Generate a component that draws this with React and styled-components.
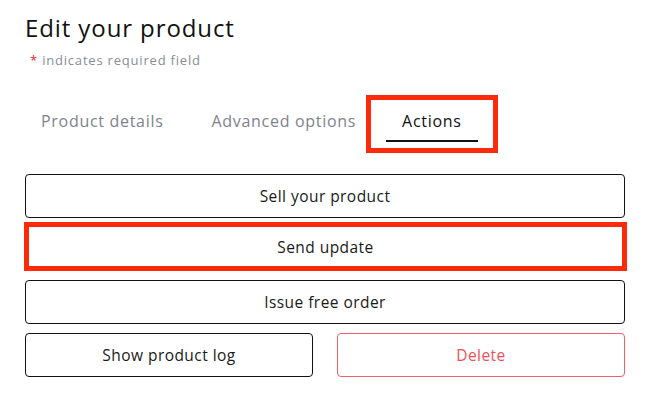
import styled, { createGlobalStyle } from "styled-components"

const GlobalStyle = createGlobalStyle`
  html, body {
    margin: 0;
    padding: 0;
    background: #ffffff;
  }
  body {
    font-family: "Open Sans", "Liberation Sans", sans-serif;
    color: #1a1a1a;
  }
  * {
    box-sizing: border-box;
  }
`

const tabs = [
  { label: "Product details" },
  { label: "Advanced options" },
  { label: "Actions", active: true, marked: true }
]

export default function App() {
  return (
    <>
      <GlobalStyle />
      <Page>
        <Title>Edit your product</Title>
        <Hint><Star>*</Star> indicates required field</Hint>

        <TabList>
          {tabs.map((t) =>
            t.marked ? (
              <Marker key={t.label}>
                <Tab $active={t.active}>{t.label}</Tab>
              </Marker>
            ) : (
              <Tab key={t.label} $active={t.active}>{t.label}</Tab>
            )
          )}
        </TabList>

        <Actions>
          <Button>Sell your product</Button>
          <Button $marked>Send update</Button>
          <Button>Issue free order</Button>
          <Row>
            <Button>Show product log</Button>
            <Button $danger>Delete</Button>
          </Row>
        </Actions>
      </Page>
    </>
  )
}

const Page = styled.div`
  width: 651px;
  padding: 13px 26px 0 25px;
`

const Title = styled.h1`
  margin: 0;
  font-size: 24px;
  line-height: 30px;
  font-weight: 400;
  letter-spacing: 0.9px;
  color: #111111;
`

const Hint = styled.div`
  margin-top: 9px;
  padding-left: 5px;
  font-size: 13px;
  line-height: 16px;
  letter-spacing: 0.8px;
  color: #8a8d96;
`

const Star = styled.span`
  color: #e8252b;
`

const TabList = styled.div`
  display: flex;
  gap: 16px;
  margin-top: 35px;
`

const Tab = styled.div`
  padding: 8px 16px 9px;
  font-size: 16px;
  line-height: 20px;
  letter-spacing: 0.7px;
  color: ${(p) => (p.$active ? "#111111" : "#80838c")};
  border-bottom: 2px solid ${(p) => (p.$active ? "#111111" : "transparent")};
  white-space: nowrap;
`

const Marker = styled.div`
  border: 5px solid #ff2a0a;
  padding: 3px 15px 6px;
  margin: -8px -20px -11px -22px;
`

const Actions = styled.div`
  display: flex;
  flex-direction: column;
  gap: 9px;
  margin-top: 32px;
`

const Row = styled.div`
  display: grid;
  grid-template-columns: 1fr 1fr;
  gap: 24px;
`

const Button = styled.button`
  height: ${(p) => (p.$marked ? "49px" : "44px")};
  margin: ${(p) => (p.$marked ? "-5px -2px 0 -1px" : "0")};
  border: ${(p) =>
    p.$marked ? "5px solid #ff2a0a" : p.$danger ? "1px solid #f0606a" : "1px solid #111111"};
  border-radius: ${(p) => (p.$marked ? "0" : "4px")};
  background: #ffffff;
  color: ${(p) => (p.$danger ? "#f0505a" : "#1a1a1a")};
  font-family: inherit;
  font-size: 15.5px;
  letter-spacing: 0.45px;
  cursor: pointer;
`
